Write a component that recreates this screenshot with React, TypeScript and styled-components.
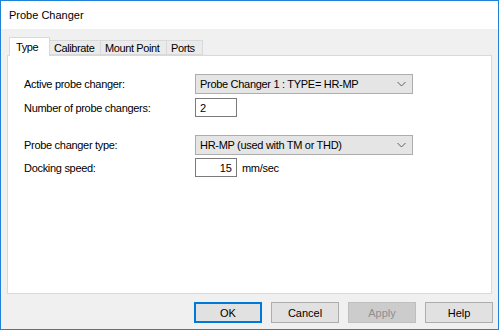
import React from "react";
import styled, { createGlobalStyle } from "styled-components";

const GlobalStyle = createGlobalStyle`
  html, body {
    margin: 0;
    padding: 0;
    background: #ffffff;
  }
  * {
    box-sizing: border-box;
  }
`;

const Window = styled.div`
  width: 499px;
  height: 330px;
  border: 1px solid #1e83d8;
  display: flex;
  flex-direction: column;
  font-family: "Liberation Sans", Arial, sans-serif;
  font-size: 11px;
  color: #000;
`;

const TitleBar = styled.div`
  height: 28px;
  background: #fff;
  display: flex;
  align-items: center;
  padding-left: 8px;
  padding-bottom: 1px;
`;

const Body = styled.div`
  flex: 1;
  background: #f0f0f0;
  display: flex;
  flex-direction: column;
  padding: 8px 5px 0 6px;
`;

const TabStrip = styled.div`
  display: flex;
  align-items: flex-end;
  height: 18px;
  padding-left: 2px;
  position: relative;
  z-index: 1;
`;

const Tab = styled.div<{ $active?: boolean; $w: number }>`
  width: ${(p) => p.$w}px;
  height: ${(p) => (p.$active ? "19px" : "15px")};
  margin-bottom: ${(p) => (p.$active ? "-1px" : "0")};
  padding: ${(p) => (p.$active ? "3px 0 0 6px" : "1px 0 0 4px")};
  background: ${(p) => (p.$active ? "#fff" : "#ebebeb")};
  border: 1px solid #d9d9d9;
  border-bottom: ${(p) => (p.$active ? "none" : "1px solid #d9d9d9")};
  margin-right: -1px;
  white-space: nowrap;
  overflow: hidden;
  letter-spacing: -0.4px;
`;

const Panel = styled.div`
  width: 485px;
  height: 239px;
  background: #fff;
  border: 1px solid #d9d9d9;
  padding: 18px 0 0 16px;
  display: flex;
  flex-direction: column;
`;

const Row = styled.div<{ $top?: number }>`
  display: flex;
  align-items: center;
  margin-top: ${(p) => p.$top ?? 0}px;
`;

const Label = styled.div`
  width: 171px;
  letter-spacing: -0.3px;
`;

const Select = styled.div`
  width: 218px;
  height: 20px;
  background: #e5e5e5;
  border: 1px solid #adadad;
  display: flex;
  align-items: center;
  justify-content: space-between;
  padding: 0 6px 0 4px;
  letter-spacing: -0.3px;
`;

const Input = styled.div<{ $right?: boolean }>`
  width: 42px;
  height: 19px;
  background: #fff;
  border: 1px solid #7a7a7a;
  display: flex;
  align-items: center;
  justify-content: ${(p) => (p.$right ? "flex-end" : "flex-start")};
  padding: 0 4px;
`;

const Unit = styled.span`
  margin-left: 5px;
  letter-spacing: -0.3px;
`;

const ButtonRow = styled.div`
  display: flex;
  justify-content: flex-end;
  gap: 9px;
  margin-top: 8px;
`;

const Button = styled.div<{ $default?: boolean; $disabled?: boolean }>`
  width: 68px;
  height: 21px;
  display: flex;
  align-items: center;
  justify-content: center;
  background: ${(p) => (p.$disabled ? "#cccccc" : "#e1e1e1")};
  border: ${(p) =>
    p.$default ? "2px solid #0078d7" : p.$disabled ? "1px solid #bfbfbf" : "1px solid #adadad"};
  color: ${(p) => (p.$disabled ? "#8f8f8f" : "#000")};
`;

const Chevron = () => (
  <svg width="9" height="6" viewBox="0 0 9 6">
    <path d="M0.5 1 L4.5 5 L8.5 1" fill="none" stroke="#606060" strokeWidth="1" />
  </svg>
);

const tabs = [
  { name: "Type", w: 41 },
  { name: "Calibrate", w: 52 },
  { name: "Mount Point", w: 67 },
  { name: "Ports", w: 37 },
];

export default function App() {
  return (
    <>
      <GlobalStyle />
      <Window>
        <TitleBar>Probe Changer</TitleBar>
        <Body>
          <TabStrip>
            {tabs.map((t, i) => (
              <Tab key={t.name} $active={i === 0} $w={t.w}>
                {t.name}
              </Tab>
            ))}
          </TabStrip>
          <Panel>
            <Row>
              <Label>Active probe changer:</Label>
              <Select>
                <span>Probe Changer 1 : TYPE= HR-MP</span>
                <Chevron />
              </Select>
            </Row>
            <Row $top={4}>
              <Label>Number of probe changers:</Label>
              <Input>2</Input>
            </Row>
            <Row $top={18}>
              <Label>Probe changer type:</Label>
              <Select>
                <span>HR-MP (used with TM or THD)</span>
                <Chevron />
              </Select>
            </Row>
            <Row $top={3}>
              <Label>Docking speed:</Label>
              <Input $right>15</Input>
              <Unit>mm/sec</Unit>
            </Row>
          </Panel>
          <ButtonRow>
            <Button $default>OK</Button>
            <Button>Cancel</Button>
            <Button $disabled>Apply</Button>
            <Button>Help</Button>
          </ButtonRow>
        </Body>
      </Window>
    </>
  );
}
